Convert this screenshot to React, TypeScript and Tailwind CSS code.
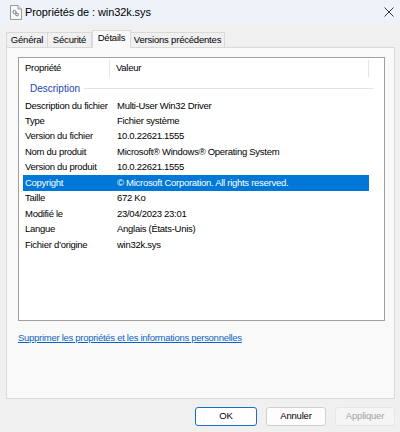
import React from "react";

const rows: [string, string][] = [
  ["Description du fichier", "Multi-User Win32 Driver"],
  ["Type", "Fichier système"],
  ["Version du fichier", "10.0.22621.1555"],
  ["Nom du produit", "Microsoft® Windows® Operating System"],
  ["Version du produit", "10.0.22621.1555"],
  ["Copyright", "© Microsoft Corporation. All rights reserved."],
  ["Taille", "672 Ko"],
  ["Modifié le", "23/04/2023 23:01"],
  ["Langue", "Anglais (États-Unis)"],
  ["Fichier d’origine", "win32k.sys"],
];

export default function App() {
  return (
    <div
      className="w-[400px] h-[432px] bg-[#f0f0f0] flex flex-col text-black overflow-hidden"
      style={{ fontFamily: '"Liberation Sans", Arial, sans-serif' }}
    >
      {/* Title bar */}
      <div className="h-[24px] bg-[#eef3f9] flex items-center shrink-0">
        <svg className="ml-[10px]" width="12" height="15" viewBox="0 0 12 15">
          <path d="M0.5 0.5 H8 L11.5 4 V14.5 H0.5 Z" fill="#fafafa" stroke="#9a9a9a" />
          <path d="M8 0.5 V4 H11.5" fill="#e6e6e6" stroke="#9a9a9a" />
          <circle cx="4.5" cy="7" r="1.6" fill="none" stroke="#7a7a7a" strokeWidth="1" />
          <circle cx="7" cy="9.5" r="1.4" fill="none" stroke="#7a7a7a" strokeWidth="1" />
        </svg>
        <span className="ml-[3px] text-[11px] leading-none tracking-[-0.1px]">Propriétés de : win32k.sys</span>
        <svg className="ml-auto mr-[6px]" width="10" height="10" viewBox="0 0 10 10">
          <path d="M0.5 0.5 L9.5 9.5 M9.5 0.5 L0.5 9.5" stroke="#222" strokeWidth="0.9" />
        </svg>
      </div>

      {/* Tabs */}
      <div className="h-[23px] flex items-end pl-[6px] shrink-0 relative z-10 text-[9.5px] tracking-[-0.2px]">
        <div className="h-[15px] w-[42px] border border-b-0 border-[#d9d9d9] bg-[#f0f0f0] flex items-center justify-center">Général</div>
        <div className="h-[15px] w-[44px] border border-l-0 border-b-0 border-[#d9d9d9] bg-[#f0f0f0] flex items-center justify-center">Sécurité</div>
        <div className="h-[18px] w-[39px] -mb-[1px] border border-b-0 border-[#d9d9d9] bg-[#f9f9f9] flex items-center justify-center pb-[2px]">Détails</div>
        <div className="h-[15px] w-[94px] border border-l-0 border-b-0 border-[#d9d9d9] bg-[#f0f0f0] flex items-center justify-center">Versions précédentes</div>
      </div>

      {/* Panel */}
      <div className="ml-[6px] mr-[5px] h-[352px] border border-[#d9d9d9] bg-[#f9f9f9] flex flex-col shrink-0">
        <div className="mt-[9px] ml-[11px] w-[367px] h-[264px] border border-[#a0a0a0] bg-white text-[9.5px] tracking-[-0.28px] flex flex-col">
          {/* header */}
          <div className="h-[21px] flex items-stretch shrink-0">
            <div className="w-[91px] flex items-center pl-[6px] border-r border-[#e5e5e5] my-[2px]">Propriété</div>
            <div className="w-[259px] flex items-center pl-[6px] border-r border-[#e5e5e5] my-[2px]">Valeur</div>
          </div>
          {/* group */}
          <div className="h-[19px] flex items-center shrink-0 pl-[11px]">
            <span className="text-[#2342b0] text-[10px] tracking-normal">Description</span>
            <div className="ml-[4px] w-[289px] h-px bg-[#dde3f2]" />
          </div>
          {rows.map(([k, v]) => {
            const sel = k === "Copyright";
            return (
              <div
                key={k}
                className={
                  "h-[15.44px] ml-[4px] w-[346px] flex items-center shrink-0 " +
                  (sel ? "bg-[#0078d7] text-white" : "")
                }
              >
                <span className="w-[94px] pl-[2px] whitespace-nowrap">{k}</span>
                <span className="whitespace-nowrap">{v}</span>
              </div>
            );
          })}
        </div>
        <div className="mt-[12px] ml-[11px] text-[9.5px] tracking-[-0.28px] text-[#0b64c8] underline leading-none">
          Supprimer les propriétés et les informations personnelles
        </div>
      </div>

      {/* Buttons */}
      <div className="flex justify-end gap-[9px] mr-[5px] mt-[8px] text-[9.5px] tracking-[-0.2px]">
        <div className="w-[62px] h-[19px] rounded-[3px] border-[1.5px] border-[#1a6fc4] bg-white flex items-center justify-center">OK</div>
        <div className="w-[60px] h-[19px] rounded-[3px] border border-[#d0d0d0] bg-[#fdfdfd] flex items-center justify-center">Annuler</div>
        <div className="w-[60px] h-[19px] rounded-[3px] border border-[#e6e6e6] bg-[#f5f5f5] text-[#a3a3a3] flex items-center justify-center">Appliquer</div>
      </div>
    </div>
  );
}
